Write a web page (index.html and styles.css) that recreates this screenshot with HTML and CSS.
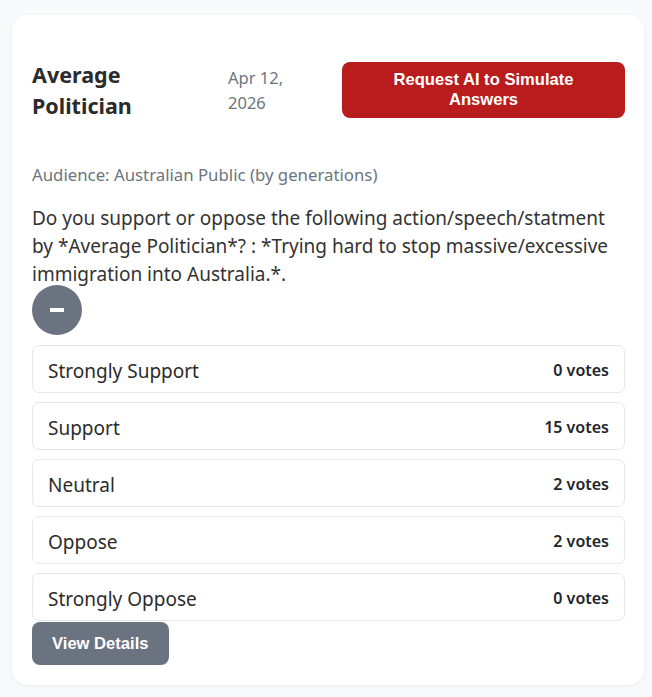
FILE: index.html
```html
<!DOCTYPE html>
<html lang="en">
  <head>
    <meta charset="UTF-8" />
    <meta name="viewport" content="width=device-width, initial-scale=1.0" />
    <title>Poll</title>
    <link rel="stylesheet" href="styles.css">
  </head>
  <body>
    <main class="card">
      <!-- Header -->
      <header class="card-header">
        <h2 class="poll-title">Average Politician</h2>
        <span class="poll-date">Apr 12, 2026</span>
        <button class="btn-simulate">Request AI to Simulate Answers</button>
      </header>

      <p class="audience">Audience: Australian Public (by generations)</p>
      <p class="question">Do you support or oppose the following action/speech/statment by *Average Politician*? : *Trying hard to stop massive/excessive immigration into Australia.*.</p>

      <button class="btn-collapse" aria-label="Collapse"><span></span></button>

      <!-- Options -->
      <ul class="options">
        <li class="option"><span class="label">Strongly Support</span><span class="votes">0 votes</span></li>
        <li class="option"><span class="label">Support</span><span class="votes">15 votes</span></li>
        <li class="option"><span class="label">Neutral</span><span class="votes">2 votes</span></li>
        <li class="option"><span class="label">Oppose</span><span class="votes">2 votes</span></li>
        <li class="option"><span class="label">Strongly Oppose</span><span class="votes">0 votes</span></li>
      </ul>

      <button class="btn-details">View Details</button>
    </main>
  </body>
</html>
```

FILE: styles.css
```css
* {
  box-sizing: border-box;
}

body {
  margin: 0;
  padding: 15px 8px 11px 12px;
  background-color: #f8f9fa;
  font-family: "Noto Sans", "Open Sans", sans-serif;
  color: #333;
}

.card {
  display: flex;
  flex-direction: column;
  align-items: flex-start;
  background-color: #fff;
  border-radius: 16px;
  padding: 20px 19px 20px 20px;
  box-shadow: 0 1px 4px rgba(0, 0, 0, 0.06);
}

/* Header */
.card-header {
  display: flex;
  align-items: center;
  width: 100%;
  padding: 24px 0;
}

.poll-title {
  flex: 0 0 196px;
  margin: 0;
  padding-right: 60px;
  font-size: 21.5px;
  line-height: 31px;
  font-weight: 700;
  color: #2b2b2b;
}

.poll-date {
  flex: 0 0 114px;
  padding-right: 40px;
  font-size: 16.5px;
  line-height: 25px;
  color: #6c757d;
}

.btn-simulate {
  flex: 1;
  height: 56px;
  border: none;
  border-radius: 8px;
  background-color: #b91c1c;
  color: #fff;
  font-family: "Liberation Sans", Arial, sans-serif;
  font-weight: 700;
  font-size: 16.6px;
  line-height: 20px;
  padding: 0 48px;
}

.audience {
  margin: 18px 0 0;
  font-size: 16.8px;
  line-height: 24px;
  color: #6c757d;
}

.question {
  margin: 17px 0 -3px;
  font-size: 19px;
  line-height: 28px;
  color: #333;
}

.btn-collapse {
  display: flex;
  justify-content: center;
  align-items: center;
  width: 50px;
  height: 50px;
  border: none;
  border-radius: 50%;
  background-color: #6b7280;
  padding: 0;
}

.btn-collapse > span {
  width: 14px;
  height: 4px;
  background-color: #fff;
}

/* Options */
.options {
  list-style: none;
  width: 100%;
  margin: 10px 0 0;
  padding: 0;
  display: flex;
  flex-direction: column;
  gap: 9px;
}

.option {
  display: flex;
  justify-content: space-between;
  align-items: center;
  height: 48px;
  padding: 0 15px;
  border: 1px solid #e5e7eb;
  border-radius: 7px;
}

.label {
  padding-top: 3px;
  font-size: 19px;
  color: #2b2b2b;
}

.votes {
  padding-top: 1px;
  font-size: 16px;
  font-weight: 600;
  color: #212529;
}

.btn-details {
  margin-top: 1px;
  height: 43px;
  padding: 0 20px;
  border: none;
  border-radius: 8px;
  background-color: #6b7280;
  color: #fff;
  font-family: "Liberation Sans", Arial, sans-serif;
  font-weight: 700;
  font-size: 16.6px;
}
```
